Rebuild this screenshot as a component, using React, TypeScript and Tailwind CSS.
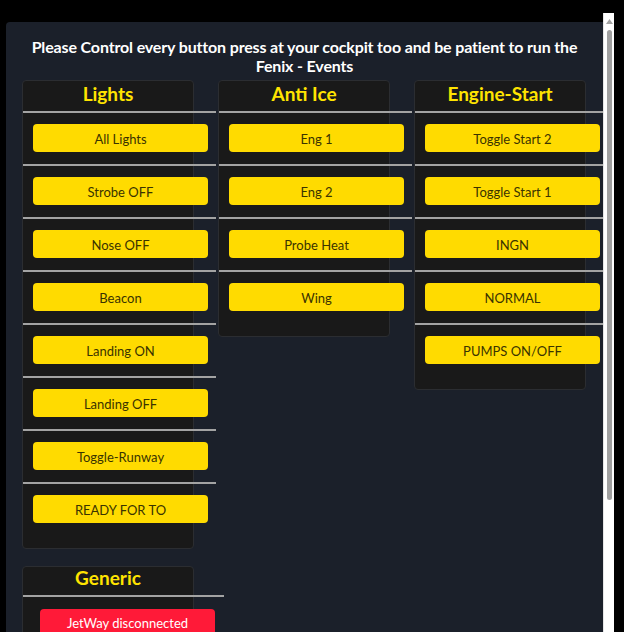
import React from 'react';

const lights = ['All Lights', 'Strobe OFF', 'Nose OFF', 'Beacon', 'Landing ON', 'Landing OFF', 'Toggle-Runway', 'READY FOR TO'];
const antiIce = ['Eng 1', 'Eng 2', 'Probe Heat', 'Wing'];
const engineStart = ['Toggle Start 2', 'Toggle Start 1', 'INGN', 'NORMAL', 'PUMPS ON/OFF'];

const font = { fontFamily: 'Lato, "Noto Sans", sans-serif' };

const Card = ({ title, items }: { title: string; items: string[] }) => {
  return (
    <div className="w-[172px] bg-[#191919] border border-[#2b2d31] rounded pb-[13px]">
      <div className="w-[170px] h-[30px] leading-[25px] text-center text-[19px] font-bold text-[#ffe400]">{title}</div>
      {/* hr + buttons are wider than the card on purpose, like the original page */}
      <div className="w-[193px]">
        {items.map((item) => (
          <div key={item}>
            <div className="h-[2px] bg-[#a3a3a3]" />
            <button className="block mt-[11px] mb-[12px] ml-[10px] w-[175px] h-[28px] pt-[3px] rounded bg-[#ffdb00] text-[13px] text-[#3a3300]">
              {item}
            </button>
          </div>
        ))}
      </div>
    </div>
  );
};

const GenericCard = () => {
  return (
    <div className="w-[172px] h-[120px] bg-[#191919] border border-[#2b2d31] rounded">
      <div className="w-[170px] h-[28px] leading-[22px] text-center text-[19px] font-bold text-[#ffe400]">Generic</div>
      <div className="w-[201px]">
        <div className="h-[2px] bg-[#a3a3a3]" />
        <button className="block mt-[12px] ml-[17px] w-[175px] h-[28px] pt-[2px] rounded bg-[#ff1a38] text-[13px] text-white">
          JetWay disconnected
        </button>
      </div>
    </div>
  );
};

export default function App() {
  return (
    <div className="w-[624px] h-[632px] bg-black overflow-hidden flex" style={font}>
      <div className="ml-[6px] mt-[22px] w-[597px] h-[610px] bg-[#1b202a] rounded-tl overflow-hidden px-4 pt-[15px]">
        <h1 className="text-center text-[16px] font-bold leading-[19px] tracking-[-0.15px] text-white mb-[5px]">
          Please Control every button press at your cockpit too and be patient to run the
          <br />
          Fenix - Events
        </h1>
        <div className="flex flex-wrap items-start gap-x-6 gap-y-[17px]">
          <Card title="Lights" items={lights} />
          <Card title="Anti Ice" items={antiIce} />
          <Card title="Engine-Start" items={engineStart} />
          <GenericCard />
        </div>
      </div>
      <div className="mt-[13px] w-[11px] h-[619px] bg-white border-l border-[#e5e5e5] flex flex-col items-center">
        <svg width="7" height="5" viewBox="0 0 7 5" className="mt-[6px]">
          <polygon points="3.5,0 7,5 0,5" fill="#a3a3a3" />
        </svg>
        <div className="mt-[6px] w-[5px] h-[470px] rounded-full bg-[#a0a0a0]" />
      </div>
    </div>
  );
}
